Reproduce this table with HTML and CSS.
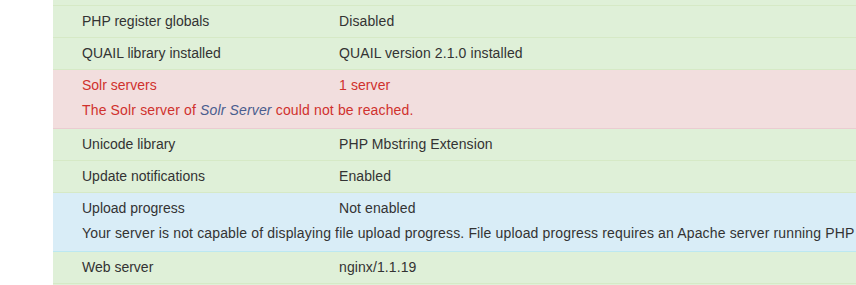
FILE: index.html
```html
<!DOCTYPE html>
<html lang="en">
<head>
  <meta charset="UTF-8">
  <title>Status report</title>
  <link rel="stylesheet" href="styles.css">
</head>
<body>
  <div class="page">
    <table class="system-status-report">
      <tbody>
        <tr class="ok edge edge-top">
          <td colspan="2"></td>
        </tr>
        <tr class="ok">
          <td class="status-title">PHP register globals</td>
          <td class="status-value">Disabled</td>
        </tr>
        <tr class="ok">
          <td class="status-title">QUAIL library installed</td>
          <td class="status-value">QUAIL version 2.1.0 installed</td>
        </tr>
        <tr class="error has-description">
          <td class="status-title">Solr servers</td>
          <td class="status-value">1 server</td>
        </tr>
        <tr class="error merge-up">
          <td colspan="2" class="status-description">The Solr server of <em class="placeholder">Solr Server</em> could not be reached.</td>
        </tr>
        <tr class="ok">
          <td class="status-title">Unicode library</td>
          <td class="status-value">PHP Mbstring Extension</td>
        </tr>
        <tr class="ok">
          <td class="status-title">Update notifications</td>
          <td class="status-value">Enabled</td>
        </tr>
        <tr class="info has-description">
          <td class="status-title">Upload progress</td>
          <td class="status-value">Not enabled</td>
        </tr>
        <tr class="info merge-up">
          <td colspan="2" class="status-description">Your server is not capable of displaying file upload progress. File upload progress requires an Apache server running PHP</td>
        </tr>
        <tr class="ok">
          <td class="status-title">Web server</td>
          <td class="status-value">nginx/1.1.19</td>
        </tr>
        <tr class="ok edge">
          <td colspan="2"></td>
        </tr>
      </tbody>
    </table>
  </div>
</body>
</html>
```

FILE: styles.css
```css
:root {
  --ok-bg: #dff0d8;
  --ok-border: #d6e9c6;
  --error-bg: #f2dede;
  --error-border: #ebccd1;
  --error-text: #d0312d;
  --info-bg: #d9edf7;
  --info-border: #bce8f1;
  --text: #333;
}

* {
  margin: 0;
  padding: 0;
  box-sizing: border-box;
}

html,
body {
  background: white;
  overflow: hidden;
}

body {
  font-family: 'Liberation Sans', Arial, sans-serif;
  font-size: 14px;
  line-height: 20px;
  color: var(--text);
}

.page {
  padding-left: 53px;
}

.system-status-report {
  width: 803px;
  border-collapse: collapse;
}

.system-status-report td {
  padding: 5px 8px 6px 0;
  vertical-align: top;
  white-space: nowrap;
}

.system-status-report .status-title {
  width: 286px;
  padding-left: 29px;
}

.system-status-report .status-value {
  letter-spacing: 0.1px;
}

.system-status-report tr.ok td {
  background: var(--ok-bg);
  border-bottom: 1px solid var(--ok-border);
}

.system-status-report tr.error td {
  background: var(--error-bg);
  border-bottom: 1px solid var(--error-border);
  color: var(--error-text);
}

.system-status-report tr.info td {
  background: var(--info-bg);
  border-bottom: 1px solid var(--info-border);
}

.system-status-report tr.has-description td {
  border-bottom: none;
  padding-bottom: 0;
}

.system-status-report .status-description {
  padding: 5px 0 8px 29px;
  letter-spacing: 0.15px;
}

/* rows cut by the top and bottom of the window */
.system-status-report tr.edge td {
  padding: 0;
  height: 6px;
}

.system-status-report tr.edge-top td {
  height: 5px;
}

em.placeholder {
  color: #4a5d8e;
}
```
